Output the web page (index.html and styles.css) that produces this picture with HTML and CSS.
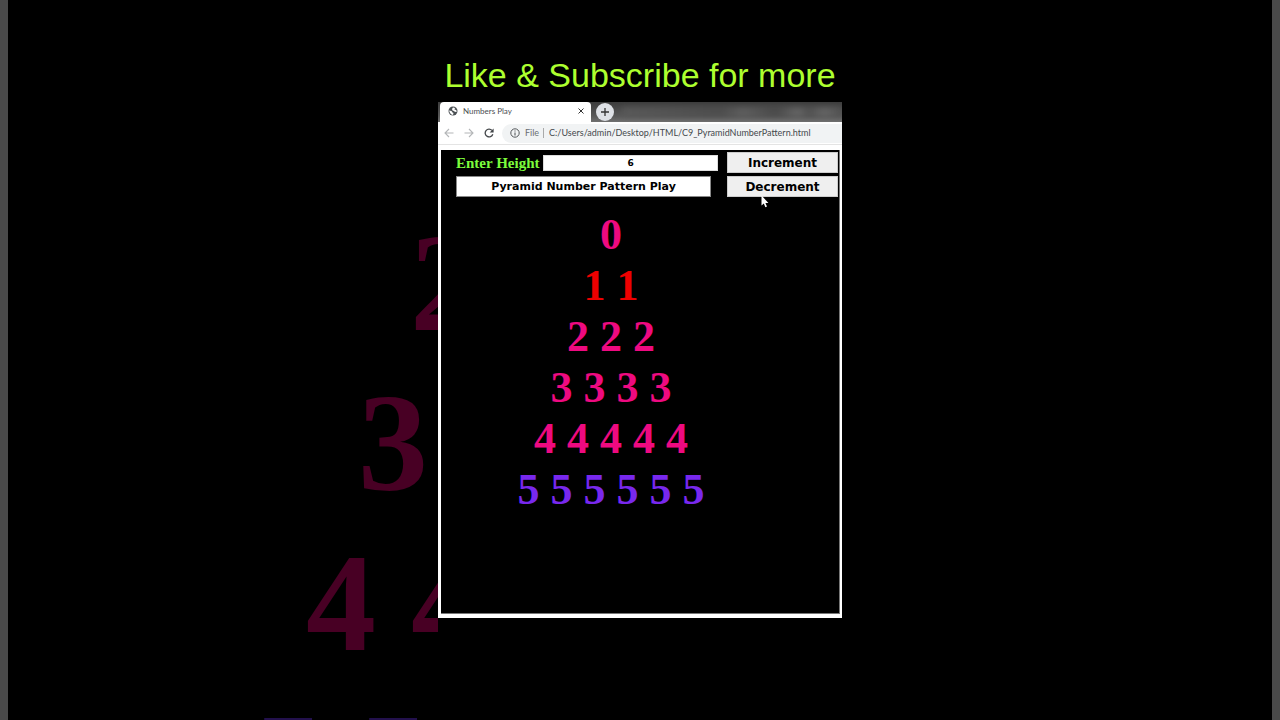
FILE: index.html
```html
<!DOCTYPE html>
<html lang="en">
<head>
  <meta charset="UTF-8" />
  <meta name="viewport" content="width=device-width, initial-scale=1.0" />
  <title>Numbers Play</title>
  <link rel="stylesheet" href="styles.css">
</head>
<body>
  <!-- enlarged, dimmed pattern behind the window -->
  <div class="side side-left" aria-hidden="true">
    <div class="ghost">
      <div class="step-3">2</div>
      <div class="step-2">3</div>
      <div class="step-1">4 4</div>
      <div class="violet">5 5</div>
    </div>
  </div>

  <main>
    <h1>Like &amp; Subscribe for more</h1>

    <div class="window">
      <div class="tabs">
        <div class="tab">
          <svg width="10" height="10" viewBox="0 0 20 20">
            <circle cx="10" cy="10" r="9" fill="#4b5054" />
            <path d="M2 9l5 1 2 3 2 1-1 4-3-1-3-3zM10 3l4 1-1 3 3 1 2 3-4 1-2-2-3-1-1-3z" fill="#fff" />
          </svg>
          <span class="tab-title">Numbers Play</span>
          <button class="tab-close" aria-label="Close tab">
            <svg width="6" height="6" viewBox="0 0 6 6"><path d="M.5.5l5 5M5.5.5l-5 5" stroke="#333" stroke-width="1" /></svg>
          </button>
        </div>
        <button class="tab-new" aria-label="New tab">
          <svg width="8" height="8" viewBox="0 0 8 8"><path d="M4 0v8M0 4h8" stroke="#333" stroke-width="1.3" /></svg>
        </button>
        <div class="strip"></div>
      </div>

      <div class="toolbar">
        <button aria-label="Back">
          <svg width="10" height="10" viewBox="0 0 10 10"><path d="M9.5 5H1M5 1L1 5l4 4" fill="none" stroke="#b4b6b8" stroke-width="1.1" /></svg>
        </button>
        <button aria-label="Forward">
          <svg width="10" height="10" viewBox="0 0 10 10"><path d="M.5 5H9M5 1l4 4-4 4" fill="none" stroke="#b4b6b8" stroke-width="1.1" /></svg>
        </button>
        <button aria-label="Reload">
          <svg width="10" height="10" viewBox="0 0 10 10"><path d="M8.8 6.2A3.9 3.9 0 1 1 8 2.4" fill="none" stroke="#44474a" stroke-width="1.3" /><path d="M9.6.4v4h-4z" fill="#44474a" /></svg>
        </button>
        <div class="address">
          <svg width="10" height="10" viewBox="0 0 10 10"><circle cx="5" cy="5" r="4.2" fill="none" stroke="#55595c" /><path d="M5 4.4v3M5 2.4v1.1" stroke="#55595c" stroke-width="1.1" /></svg>
          <span class="scheme">File</span>
          <span class="url">C:/Users/admin/Desktop/HTML/C9_PyramidNumberPattern.html</span>
        </div>
      </div>

      <div class="page">
        <form class="controls">
          <div class="field">
            <label for="height">Enter Height</label>
            <input type="text" id="height" value="6" />
          </div>
          <button type="button">Increment</button>
          <button type="button" class="play">Pyramid Number Pattern Play</button>
          <button type="button">Decrement</button>
        </form>

        <div class="pyramid">
          <div>0</div>
          <div class="red">1 1</div>
          <div>2 2 2</div>
          <div>3 3 3 3</div>
          <div>4 4 4 4 4</div>
          <div class="violet">5 5 5 5 5 5</div>
        </div>

        <svg class="cursor" width="8" height="13" viewBox="0 0 8 13"><path d="M.5.5v10l2.3-2 1.6 3.8 1.6-.7-1.6-3.6h3z" fill="#fff" /></svg>
      </div>
    </div>
  </main>

  <div class="side side-right"></div>
</body>
</html>
```
FILE: styles.css
```css
* {
  box-sizing: border-box;
}

body {
  display: flex;
  height: 100vh;
  margin: 0;
  overflow: hidden;
  background-color: #000;
}

button {
  padding: 0;
  border: none;
  background: none;
}

svg {
  display: block;
}

.side {
  flex: 1;
  min-width: 0;
  overflow: hidden;
}

.side-left {
  display: flex;
  justify-content: flex-end;
  border-left: 8px solid #4a4a4a;
}

.side-right {
  border-right: 8px solid #4a4a4a;
}

.ghost {
  flex: none;
  width: 184px;
  padding-top: 203px;
  font: bold 140px/160px "Liberation Serif", serif;
  white-space: nowrap;
  color: #480024;
}

/* each row starts half a digit further left */
.step-1 {
  padding-left: 52px;
}

.step-2 {
  padding-left: 104px;
}

.step-3 {
  padding-left: 156px;
}

.ghost .violet {
  color: #22104c;
}

main {
  width: 404px;
  padding-top: 55px;
}

h1 {
  margin: 0 0 7px;
  font: 34px/40px "Liberation Sans", sans-serif;
  text-align: center;
  white-space: nowrap;
  color: #adff2f;
}

/* browser window */
.window {
  background-color: #fff;
  padding-bottom: 4px;
}

.tabs {
  display: flex;
  align-items: center;
  height: 20px;
  overflow: hidden;
  background: linear-gradient(#3c3c3c, #585858 70%, #707070);
}

.tab {
  display: flex;
  align-items: center;
  gap: 5px;
  width: 151px;
  height: 20px;
  margin-left: 2px;
  padding: 0 7px 2px 8px;
  border-radius: 4px 4px 0 0;
  background-color: #fff;
}

.tab-title {
  flex: 1;
  font: 8px/12px Lato, sans-serif;
  color: #4a4d50;
}

.tab-new {
  display: flex;
  align-items: center;
  justify-content: center;
  width: 18px;
  height: 18px;
  margin: 0 8px 0 5px;
  border-radius: 50%;
  background-color: #dee1e6;
}

.strip {
  flex: 1;
  height: 8px;
  background: linear-gradient(90deg, #5a5a5a, #4c4c4c 45%, #606060 55%, #484848 70%, #686868 80%, #505050 85%, #686868 92%, #505050);
  filter: blur(3px);
}

.toolbar {
  display: flex;
  align-items: center;
  gap: 10px;
  height: 23px;
  padding-left: 6px;
  border-bottom: 1px solid #e4e4e4;
}

.address {
  display: flex;
  flex: 1;
  align-items: center;
  gap: 5px;
  height: 19px;
  margin-left: -2px;
  padding-left: 8px;
  border-radius: 10px 0 0 10px;
  background-color: #f1f3f4;
  font: 9px/12px Lato, sans-serif;
  white-space: nowrap;
}

.scheme {
  padding-right: 4px;
  border-right: 1px solid #aaa;
  line-height: 10px;
  color: #6a6e72;
}

.url {
  color: #44484c;
}

/* page content */
.page {
  position: relative;
  min-height: 464px;
  margin: 5px 2px 0 3px;
  padding: 2px 1px 0 15px;
  border: 1px solid #777;
  border-width: 0 1px 1px 0;
  background-color: #000;
}

.controls {
  display: grid;
  grid-template-columns: 1fr 111px;
  gap: 3px 9px;
}

.controls button {
  height: 21px;
  border: 1px solid #ccc;
  background-color: #efefef;
  font: bold 12px/18px "DejaVu Sans", sans-serif;
  color: #000;
}

.controls .play {
  width: 255px;
  border: 1px solid #888;
  background-color: #fff;
  font-size: 11px;
}

.field {
  display: flex;
  align-items: center;
  gap: 4px;
}

.field label {
  font: bold 15px/20px "Liberation Serif", serif;
  white-space: nowrap;
  color: #7cfc3c;
}

.field input {
  flex: 1;
  min-width: 0;
  height: 16px;
  padding: 0;
  border: 1px solid #ddd;
  font: bold 9px/14px "DejaVu Sans", sans-serif;
  text-align: center;
}

.pyramid {
  margin: 12px 72px 0 0;
  font: bold 44px/51px "Liberation Serif", serif;
  text-align: center;
  color: #ee0a80;
}

.pyramid .red {
  color: #ee0000;
}

.pyramid .violet {
  color: #7828ee;
}

.cursor {
  position: absolute;
  top: 45px;
  left: 320px;
}
```
